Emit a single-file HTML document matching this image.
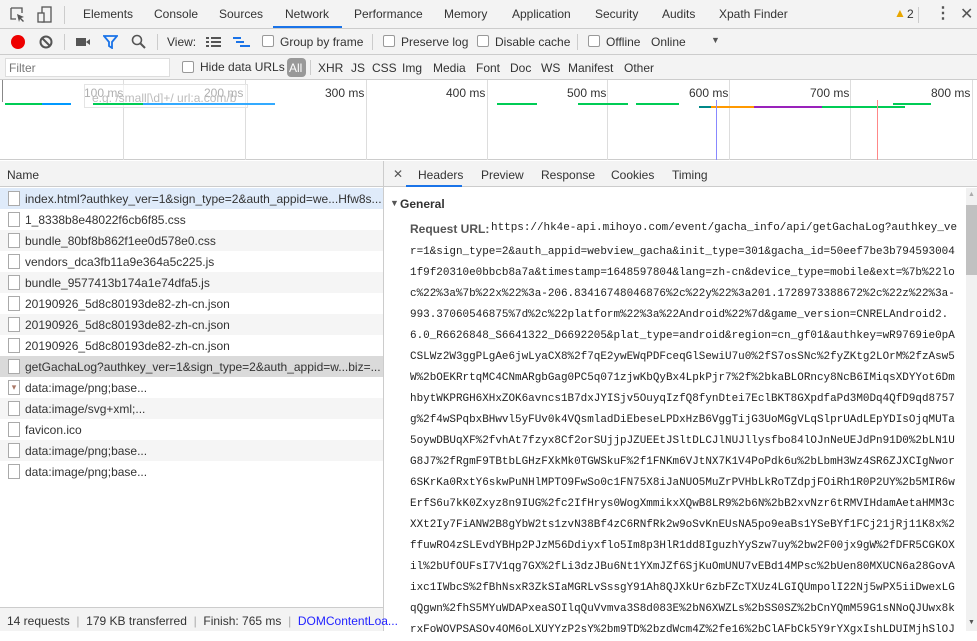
<!DOCTYPE html><html><head><meta charset="utf-8"><style>
*{box-sizing:border-box;margin:0;padding:0}
body{width:977px;height:631px;overflow:hidden;background:#fff;font-family:"Liberation Sans",sans-serif;font-size:12px;color:#333;position:relative}
.abs{position:absolute}
.tabs{left:0;top:0;width:977px;height:29px;background:#f3f3f3;border-bottom:1px solid #ccc}
.tabs span{position:absolute;top:7px;color:#333}
.bar{left:0;width:977px;background:#f3f3f3;border-bottom:1px solid #ccc}
.cb{display:inline-block;width:12px;height:12px;border:1px solid #999;border-radius:2px;background:#fff;position:absolute}
.t{position:absolute;white-space:nowrap}
.sep{position:absolute;width:1px;background:#ccc}
.row{position:absolute;left:0;width:383px;height:21px;white-space:nowrap}
.row .ic{position:absolute;left:8px;top:3px;width:12px;height:15px;border:1px solid #aaa;background:#fff}
.row .n{position:absolute;left:25px;top:4px}
.mono{font-family:"Liberation Mono",monospace;font-size:10.95px;color:#222;position:absolute;left:410px;white-space:pre}
</style></head><body>
<div class="abs tabs">
 <svg class="abs" style="left:10px;top:7px" width="16" height="16"><path d="M1 1h11v5M1 1v11h5" fill="none" stroke="#555" stroke-width="1.3"/><path d="M7 7l7 3-3 1 3 3-1 1-3-3-1 3z" fill="#555"/></svg>
 <svg class="abs" style="left:37px;top:6px" width="16" height="18"><rect x="5" y="1" width="9" height="15" fill="none" stroke="#555" stroke-width="1.3"/><rect x="1" y="7" width="6" height="9" fill="#f3f3f3" stroke="#555" stroke-width="1.3"/></svg>
 <div class="sep" style="left:64px;top:6px;height:18px"></div>
 <span style="left:83px">Elements</span><span style="left:154px">Console</span><span style="left:219px">Sources</span><span style="left:285px">Network</span><span style="left:354px">Performance</span><span style="left:444px">Memory</span><span style="left:512px">Application</span><span style="left:595px">Security</span><span style="left:662px">Audits</span><span style="left:719px">Xpath Finder</span>
 <div class="abs" style="left:273px;top:26px;width:69px;height:2px;background:#1a73e8"></div>
 <span style="left:894px;top:6px;color:#e8a600">▲</span><span style="left:907px">2</span>
 <div class="sep" style="left:918px;top:7px;height:16px"></div>
 <span style="left:935px;top:3px;font-size:16px;font-weight:bold;color:#555">⋮</span>
 <span style="left:960px;top:4px;font-size:16px;color:#555">✕</span>
</div>
<div class="abs bar" style="top:29px;height:26px">
 <div class="abs" style="left:11px;top:6px;width:14px;height:14px;border-radius:50%;background:#e00"></div>
 <svg class="abs" style="left:39px;top:6px" width="14" height="14"><circle cx="7" cy="7" r="5.5" fill="none" stroke="#555" stroke-width="2"/><path d="M3 3l8 8" stroke="#555" stroke-width="2"/></svg>
 <div class="sep" style="left:64px;top:5px;height:16px"></div>
 <svg class="abs" style="left:76px;top:8px" width="15" height="10"><rect x="0" y="1" width="10" height="8" fill="#555"/><path d="M10 5l4-3v6z" fill="#555"/></svg>
 <svg class="abs" style="left:103px;top:6px" width="15" height="14"><path d="M1 1h13l-5 6v6l-3-2v-4z" fill="none" stroke="#1a73e8" stroke-width="1.8"/></svg>
 <svg class="abs" style="left:131px;top:5px" width="15" height="15"><circle cx="6" cy="6" r="4.5" fill="none" stroke="#555" stroke-width="1.6"/><path d="M9 9l5 5" stroke="#555" stroke-width="2"/></svg>
 <div class="sep" style="left:157px;top:5px;height:16px"></div>
 <span class="t" style="left:167px;top:6px">View:</span>
 <svg class="abs" style="left:206px;top:8px" width="16" height="10"><path d="M0 1h3M5 1h10M0 5h3M5 5h10M0 9h3M5 9h10" stroke="#555" stroke-width="2"/></svg>
 <svg class="abs" style="left:233px;top:8px" width="18" height="10"><path d="M0 1h8M3 5h8M7 9h10" stroke="#1a73e8" stroke-width="2"/></svg>
 <span class="cb" style="left:262px;top:6px"></span><span class="t" style="left:280px;top:6px">Group by frame</span>
 <div class="sep" style="left:372px;top:5px;height:16px"></div>
 <span class="cb" style="left:383px;top:6px"></span><span class="t" style="left:401px;top:6px">Preserve log</span>
 <span class="cb" style="left:477px;top:6px"></span><span class="t" style="left:495px;top:6px">Disable cache</span>
 <div class="sep" style="left:577px;top:5px;height:16px"></div>
 <span class="cb" style="left:588px;top:6px"></span><span class="t" style="left:606px;top:6px">Offline</span>
 <span class="t" style="left:651px;top:6px">Online</span>
 <span class="t" style="left:711px;top:6px;font-size:9px;color:#555">▼</span>
</div>
<div class="abs bar" style="top:55px;height:25px">
 <div class="abs" style="left:5px;top:3px;width:165px;height:19px;background:#fff;border:1px solid #ddd"></div>
 <span class="t" style="left:9px;top:6px;color:#777">Filter</span>
 <span class="cb" style="left:182px;top:6px"></span><span class="t" style="left:200px;top:5px">Hide data URLs</span>
 <div class="abs" style="left:287px;top:3px;width:19px;height:19px;border-radius:4px;background:#999"></div><span class="t" style="left:289px;top:6px;color:#fff">All</span>
 <div class="sep" style="left:310px;top:5px;height:15px"></div>
 <span class="t" style="left:318px;top:6px">XHR</span><span class="t" style="left:351px;top:6px">JS</span><span class="t" style="left:372px;top:6px">CSS</span><span class="t" style="left:402px;top:6px">Img</span><span class="t" style="left:433px;top:6px">Media</span><span class="t" style="left:476px;top:6px">Font</span><span class="t" style="left:510px;top:6px">Doc</span><span class="t" style="left:541px;top:6px">WS</span><span class="t" style="left:568px;top:6px">Manifest</span><span class="t" style="left:624px;top:6px">Other</span>
</div>
<div class="abs" style="left:0;top:80px;width:977px;height:80px;background:#fff;border-bottom:1px solid #ccc">
 <div class="sep" style="left:2px;top:0;height:22px;background:#888"></div>
 <div class="sep" style="left:123px;top:0;height:80px;background:#ddd"></div><div class="sep" style="left:245px;top:0;height:80px;background:#ddd"></div><div class="sep" style="left:366px;top:0;height:80px;background:#ddd"></div><div class="sep" style="left:487px;top:0;height:80px;background:#ddd"></div><div class="sep" style="left:607px;top:0;height:80px;background:#ddd"></div><div class="sep" style="left:729px;top:0;height:80px;background:#ddd"></div><div class="sep" style="left:850px;top:0;height:80px;background:#ddd"></div><div class="sep" style="left:972px;top:0;height:80px;background:#ddd"></div>
 <span class="t" style="left:84px;top:6px">100 ms</span><span class="t" style="left:204px;top:6px">200 ms</span><span class="t" style="left:325px;top:6px">300 ms</span><span class="t" style="left:446px;top:6px">400 ms</span><span class="t" style="left:567px;top:6px">500 ms</span><span class="t" style="left:689px;top:6px">600 ms</span><span class="t" style="left:810px;top:6px">700 ms</span><span class="t" style="left:931px;top:6px">800 ms</span>
 <div class="abs" style="left:84px;top:4px;width:164px;height:24px;border:1px solid #e4e4e4;background:rgba(255,255,255,.6)"></div>
 <span class="t" style="left:92px;top:11px;color:#bbb">e.g. /small[\d]+/ url:a.com/b</span>
 <div class="abs" style="left:5px;top:23px;width:37px;height:2px;background:#0c5"></div><div class="abs" style="left:42px;top:23px;width:29px;height:2px;background:#09f"></div>
 <div class="abs" style="left:93px;top:23px;width:50px;height:2px;background:#0c5"></div><div class="abs" style="left:143px;top:23px;width:132px;height:2px;background:#3af"></div>
 <div class="abs" style="left:497px;top:23px;width:40px;height:2px;background:#0c5"></div><div class="abs" style="left:578px;top:23px;width:50px;height:2px;background:#0c5"></div><div class="abs" style="left:636px;top:23px;width:43px;height:2px;background:#0c5"></div>
 <div class="abs" style="left:699px;top:26px;width:12px;height:2px;background:#088"></div><div class="abs" style="left:711px;top:26px;width:43px;height:2px;background:#f90"></div><div class="abs" style="left:754px;top:26px;width:68px;height:2px;background:#92b"></div><div class="abs" style="left:822px;top:26px;width:83px;height:2px;background:#0c5"></div>
 <div class="abs" style="left:893px;top:23px;width:38px;height:2px;background:#0c5"></div>
 <div class="sep" style="left:716px;top:20px;height:60px;background:#88f"></div><div class="sep" style="left:877px;top:20px;height:60px;background:#f88"></div>
</div>
<div class="abs" style="left:0;top:161px;width:384px;height:446px;border-right:1px solid #ccc;background:#fff">
 <div class="abs" style="left:0;top:0;width:383px;height:26px;background:#f3f3f3;border-bottom:1px solid #ccc"><span class="t" style="left:7px;top:7px">Name</span></div>
</div>
<div class="row" style="top:188px;background:#dfebfa"><span class="ic"></span><span class="n">index.html?authkey_ver=1&amp;sign_type=2&amp;auth_appid=we...Hfw8s...</span></div>
<div class="row" style="top:209px"><span class="ic"></span><span class="n">1_8338b8e48022f6cb6f85.css</span></div>
<div class="row" style="top:230px;background:#f5f5f5"><span class="ic"></span><span class="n">bundle_80bf8b862f1ee0d578e0.css</span></div>
<div class="row" style="top:251px"><span class="ic"></span><span class="n">vendors_dca3fb11a9e364a5c225.js</span></div>
<div class="row" style="top:272px;background:#f5f5f5"><span class="ic"></span><span class="n">bundle_9577413b174a1e74dfa5.js</span></div>
<div class="row" style="top:293px"><span class="ic"></span><span class="n">20190926_5d8c80193de82-zh-cn.json</span></div>
<div class="row" style="top:314px;background:#f5f5f5"><span class="ic"></span><span class="n">20190926_5d8c80193de82-zh-cn.json</span></div>
<div class="row" style="top:335px"><span class="ic"></span><span class="n">20190926_5d8c80193de82-zh-cn.json</span></div>
<div class="row" style="top:356px;background:#dadada"><span class="ic"></span><span class="n">getGachaLog?authkey_ver=1&amp;sign_type=2&amp;auth_appid=w...biz=...</span></div>
<div class="row" style="top:377px"><span class="ic" style="color:#a76;font-size:9px;line-height:12px;text-align:center">▾</span><span class="n">data:image/png;base...</span></div>
<div class="row" style="top:398px;background:#f5f5f5"><span class="ic"></span><span class="n">data:image/svg+xml;...</span></div>
<div class="row" style="top:419px"><span class="ic"></span><span class="n">favicon.ico</span></div>
<div class="row" style="top:440px;background:#f5f5f5"><span class="ic"></span><span class="n">data:image/png;base...</span></div>
<div class="row" style="top:461px"><span class="ic"></span><span class="n">data:image/png;base...</span></div>
<div class="abs" style="left:0;top:607px;width:384px;height:24px;background:#f3f3f3;border-top:1px solid #ccc;border-right:1px solid #ccc;white-space:nowrap">
 <span class="t" style="left:7px;top:6px">14 requests <span style="color:#aaa">&nbsp;|&nbsp;</span> 179 KB transferred <span style="color:#aaa">&nbsp;|&nbsp;</span> Finish: 765 ms <span style="color:#aaa">&nbsp;|&nbsp;</span> <span style="color:#22f">DOMContentLoa...</span></span>
</div>
<div class="abs" style="left:384px;top:161px;width:593px;height:26px;background:#f3f3f3;border-bottom:1px solid #ccc">
 <span class="t" style="left:9px;top:6px;color:#555">✕</span>
 <span class="t" style="left:34px;top:7px">Headers</span><span class="t" style="left:97px;top:7px">Preview</span><span class="t" style="left:157px;top:7px">Response</span><span class="t" style="left:227px;top:7px">Cookies</span><span class="t" style="left:288px;top:7px">Timing</span>
 <div class="abs" style="left:22px;top:24px;width:56px;height:2px;background:#1a73e8"></div>
</div>
<span class="t" style="left:390px;top:198px;font-size:9px;color:#555">▼</span><span class="t" style="left:400px;top:197px;font-weight:bold;color:#333">General</span>
<div class="abs" style="left:966px;top:188px;width:11px;height:443px;background:#f1f1f1"></div>
<div class="abs" style="left:966px;top:205px;width:11px;height:70px;background:#c1c1c1"></div>
<span class="t" style="left:968px;top:191px;font-size:7px;color:#aaa">▲</span><span class="t" style="left:968px;top:619px;font-size:7px;color:#555">▼</span>
<span class="t" style="left:410px;top:222px;font-weight:bold;color:#555">Request URL:</span>
<div class="mono" style="left:491px;top:222px">https://hk4e-api.mihoyo.com/event/gacha_info/api/getGachaLog?authkey_ve</div>
<div class="mono" style="top:242px;line-height:21px">r=1&amp;sign_type=2&amp;auth_appid=webview_gacha&amp;init_type=301&amp;gacha_id=50eef7be3b794593004
1f9f20310e0bbcb8a7a&amp;timestamp=1648597804&amp;lang=zh-cn&amp;device_type=mobile&amp;ext=%7b%22lo
c%22%3a%7b%22x%22%3a-206.83416748046876%2c%22y%22%3a201.1728973388672%2c%22z%22%3a-
993.37060546875%7d%2c%22platform%22%3a%22Android%22%7d&amp;game_version=CNRELAndroid2.
6.0_R6626848_S6641322_D6692205&amp;plat_type=android&amp;region=cn_gf01&amp;authkey=wR9769ie0pA
CSLWz2W3ggPLgAe6jwLyaCX8%2f7qE2ywEWqPDFceqGlSewiU7u0%2fS7osSNc%2fyZKtg2LOrM%2fzAsw5
W%2bOEKRrtqMC4CNmARgbGag0PC5q071zjwKbQyBx4LpkPjr7%2f%2bkaBLORncy8NcB6IMiqsXDYYot6Dm
hbytWKPRGH6XHxZOK6avncs1B7dxJYISjv5OuyqIzfQ8fynDtei7EclBKT8GXpdfaPd3M0Dq4QfD9qd8757
g%2f4wSPqbxBHwvl5yFUv0k4VQsmladDiEbeseLPDxHzB6VggTijG3UoMGgVLqSlprUAdLEpYDIsOjqMUTa
5oywDBUqXF%2fvhAt7fzyx8Cf2orSUjjpJZUEEtJSltDLCJlNUJllysfbo84lOJnNeUEJdPn91D0%2bLN1U
G8J7%2fRgmF9TBtbLGHzFXkMk0TGWSkuF%2f1FNKm6VJtNX7K1V4PoPdk6u%2bLbmH3Wz4SR6ZJXCIgNwor
6SKrKa0RxtY6skwPuNHlMPTO9FwSo0c1FN75X8iJaNUO5MuZrPVHbLkRoTZdpjFOiRh1R0P2UY%2b5MIR6w
ErfS6u7kK0Zxyz8n9IUG%2fc2IfHrys0WogXmmikxXQwB8LR9%2b6N%2bB2xvNzr6tRMVIHdamAetaHMM3c
XXt2Iy7FiANW2B8gYbW2ts1zvN38Bf4zC6RNfRk2w9oSvKnEUsNA5po9eaBs1YSeBYf1FCj21jRj11K8x%2
ffuwRO4zSLEvdYBHp2PJzM56Ddiyxflo5Im8p3HlR1dd8IguzhYySzw7uy%2bw2F00jx9gW%2fDFR5CGKOX
il%2bUfOUFsI7V1qg7GX%2fLi3dzJBu6Nt1YXmJZf6SjKuOmUNU7vEBd14MPsc%2bUen80MXUCN6a28GovA
ixc1IWbcS%2fBhNsxR3ZkSIaMGRLvSssgY91Ah8QJXkUr6zbFZcTXUz4LGIQUmpolI22Nj5wPX5iiDwexLG
qQgwn%2fhS5MYuWDAPxeaSOIlqQuVvmva3S8d083E%2bN6XWZLs%2bSS0SZ%2bCnYQmM59G1sNNoQJUwx8k
rxFoWOVPSASOv4OM6oLXUYYzP2sY%2bm9TD%2bzdWcm4Z%2fe16%2bClAFbCk5Y9rYXgxIshLDUIMjhSlOJ</div>
</body></html>
